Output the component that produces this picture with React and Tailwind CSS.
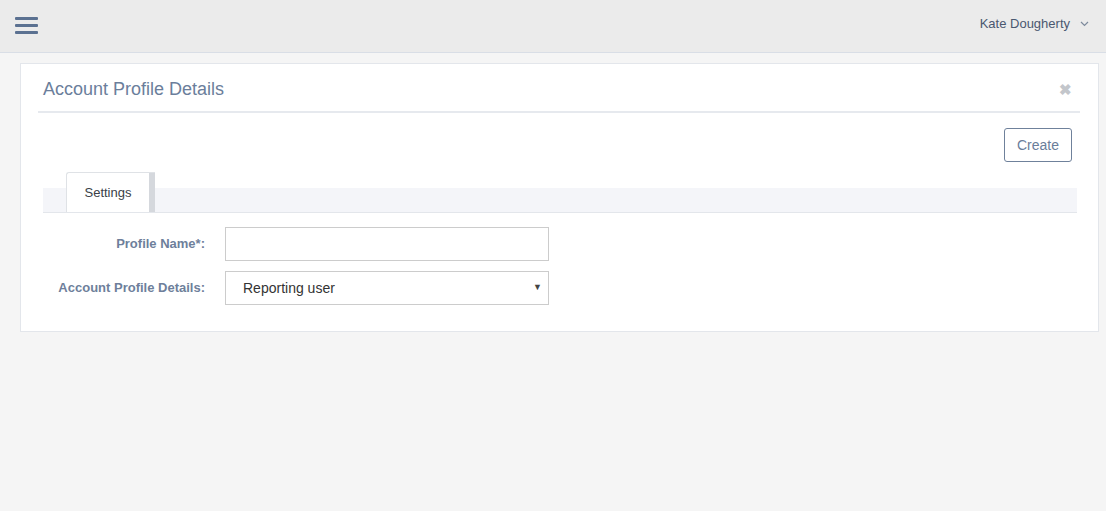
import { useState } from 'react'

function Hamburger() {
  return (
    <div className="flex w-[23px] flex-col gap-[4px]">
      <span className="block h-[3px] rounded-[1px] bg-[#5b7191]" />
      <span className="block h-[3px] rounded-[1px] bg-[#5b7191]" />
      <span className="block h-[3px] rounded-[1px] bg-[#5b7191]" />
    </div>
  )
}

export default function App() {
  const [nombre, setNombre] = useState('')
  const [perfil, setPerfil] = useState('Reporting user')

  return (
    <div className="min-h-[511px] bg-[#f5f5f5] font-['Liberation_Sans',Arial,sans-serif]">
      {/* Barra superior */}
      <header className="flex h-[53px] items-center justify-between border-b border-[#d9dee6] bg-[#ebebeb] pl-[15px] pr-[16px]">
        <button className="pb-[1px]">
          <Hamburger />
        </button>
        <button className="mb-[5px] flex items-center gap-[10px] pr-[1px] text-[13px] text-[#4a5870]">
          <span>Kate Dougherty</span>
          <svg width="9" height="6" viewBox="0 0 9 6" className="mt-[1px]">
            <path d="M1 1l3.5 3.5L8 1" fill="none" stroke="#7d8a9c" strokeWidth="1.2" />
          </svg>
        </button>
      </header>

      <div className="pl-[20px] pr-[7px] pt-[10px]">
        <div className="border border-[#e3e6eb] bg-white pb-[26px]">
          {/* Cabecera */}
          <div className="ml-[17px] mr-[18px] flex h-[49px] items-center justify-between border-b-2 border-[#e6e9ee] pl-[5px] pr-[8px] pt-[3px]">
            <h1 className="text-[18px] text-[#6b7e9b]">Account Profile Details</h1>
            <span className="text-[15px] font-bold leading-none text-[#c3c6cb]">✖</span>
          </div>

          <div className="flex justify-end pr-[26px] pt-[15px]">
            <button className="h-[34px] rounded-[3px] border border-[#6f819b] px-[12px] text-[14px] text-[#6a7d9a]">
              Create
            </button>
          </div>

          {/* Pestañas */}
          <div className="ml-[22px] mr-[21px] mt-[11px] flex h-[40px] items-end border-b border-[#e3e6eb] bg-[linear-gradient(to_bottom,white_15px,#f4f5f9_15px)] pl-[23px]">
            <div className="flex h-[40px] w-[89px] items-center justify-center rounded-tl-[3px] border-l border-t border-[#dfe2e6] bg-white pr-[6px] text-[13px] text-[#3a3f47] shadow-[inset_-6px_0_0_#d5d8dd]">
              Settings
            </div>
          </div>

          {/* Formulario */}
          <div className="mt-[14px] flex flex-col gap-[10px]">
            <div className="flex items-center">
              <label className="w-[184px] text-right text-[13px] font-bold text-[#6e7f9b]">Profile Name*:</label>
              <input
                value={nombre}
                onChange={(e) => setNombre(e.target.value)}
                className="ml-[20px] h-[34px] w-[324px] border border-[#cccccc] px-[12px] text-[14px] outline-none"
              />
            </div>
            <div className="flex items-center">
              <label className="w-[184px] text-right text-[13px] font-bold text-[#6e7f9b]">Account Profile Details:</label>
              <div className="relative ml-[20px] w-[324px]">
                <select
                  value={perfil}
                  onChange={(e) => setPerfil(e.target.value)}
                  className="h-[34px] w-full appearance-none border border-[#cccccc] bg-white pl-[17px] text-[14px] text-[#333] outline-none"
                >
                  <option>Reporting user</option>
                  <option>Administrator</option>
                </select>
                <span className="pointer-events-none absolute right-[7px] top-[10px] text-[9px] text-[#444]">▼</span>
              </div>
            </div>
          </div>
        </div>
      </div>
    </div>
  )
}
